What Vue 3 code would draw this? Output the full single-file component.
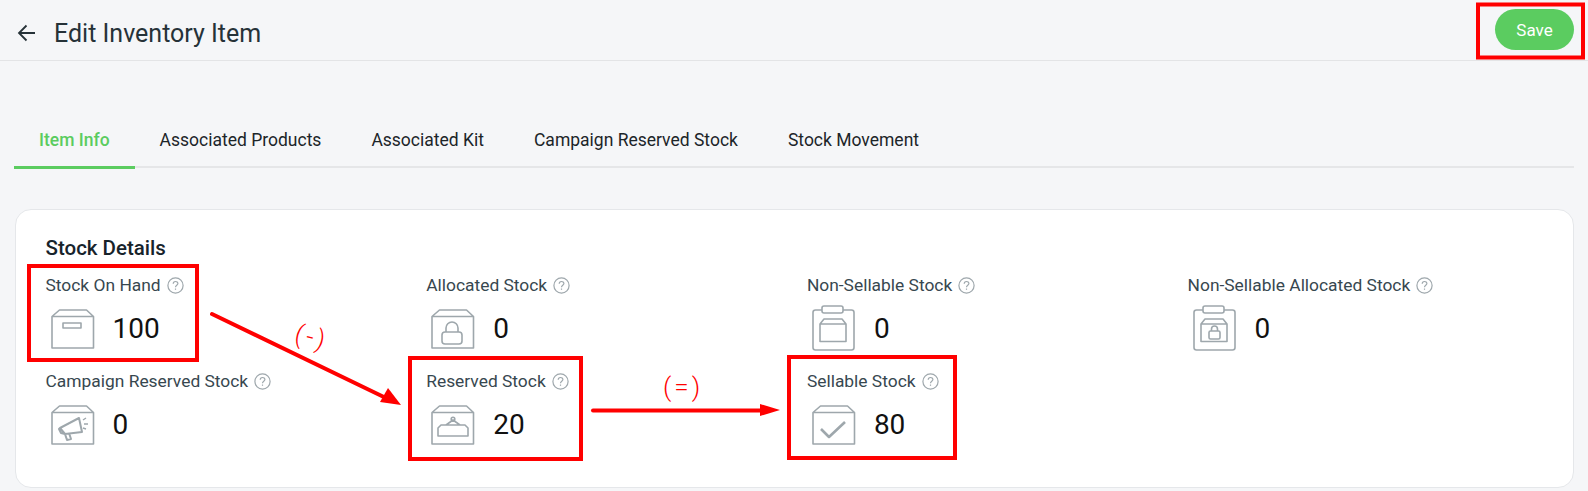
<script setup>
import { ref } from 'vue'

const tabs = ref(['Item Info', 'Associated Products', 'Associated Kit', 'Campaign Reserved Stock', 'Stock Movement'])

const stats = ref([
  { label: 'Stock On Hand', value: 100, icon: 'box' },
  { label: 'Allocated Stock', value: 0, icon: 'lock' },
  { label: 'Non-Sellable Stock', value: 0, icon: 'clip' },
  { label: 'Non-Sellable Allocated Stock', value: 0, icon: 'cliplock' },
  { label: 'Campaign Reserved Stock', value: 0, icon: 'promo' },
  { label: 'Reserved Stock', value: 20, icon: 'tag' },
  { label: 'Sellable Stock', value: 80, icon: 'check' }
])
</script>

<template>
  <div class="page">
    <header class="topbar">
      <div class="title">
        <svg class="back" width="20" height="20" viewBox="0 0 20 20" fill="none" stroke="#263238" stroke-width="1.8">
          <path d="M18 10H2M9.500 2.500L2 10l7.500 7.500" />
        </svg>
        <h1>Edit Inventory Item</h1>
      </div>
      <button class="save">Save</button>
    </header>

    <nav class="tabs">
      <a v-for="(tab, i) in tabs" :key="tab" class="tab" :class="{ active: i === 0 }">{{ tab }}</a>
    </nav>

    <section class="card">
      <h2>Stock Details</h2>
      <div class="grid">
        <div v-for="s in stats" :key="s.label" class="stat">
          <div class="label">
            {{ s.label }}
            <svg class="help" width="17" height="17" viewBox="0 0 17 17" fill="none" stroke="#9ea7ac" stroke-width="1.2">
              <circle cx="8.500" cy="8.500" r="7.600" />
              <path d="M6.200 6.800c0-3 4.700-3 4.700-.2 0 1.700-2.400 1.700-2.400 3.600" />
              <path d="M8.500 11.500v1.300" />
            </svg>
          </div>
          <div class="value-row">
            <svg class="icon" width="46" height="46" viewBox="0 0 46 46" fill="none" stroke="#9ea7ac" stroke-width="1.6" stroke-linejoin="round">
              <template v-if="s.icon === 'clip' || s.icon === 'cliplock'">
                <rect x="2" y="5" width="41" height="40" rx="2.500" />
                <rect x="11" y="1" width="21" height="7" rx="2" fill="#fff" />
                <path d="M9 36.500V19l4-5h18l4 5v17.500zM9 19h26" />
                <template v-if="s.icon === 'cliplock'">
                  <rect x="17" y="26" width="11" height="8" rx="1.500" />
                  <path d="M19.500 26v-2a3 3 0 0 1 6 0v2" />
                </template>
              </template>
              <template v-else>
                <path d="M2 43V11.500L9.500 5h27l7 6.500V43zM2 11.500h41.500" />
                <rect v-if="s.icon === 'box'" x="13" y="18" width="18" height="5" />
                <template v-if="s.icon === 'lock'">
                  <rect x="12" y="27" width="20" height="12" rx="3" />
                  <path d="M16 27v-4a6 6 0 0 1 12 0v4" />
                </template>
                <template v-if="s.icon === 'tag'">
                  <path d="M8 27l3-3h24l3 3v8H8zM16 24l7-5 7 5" />
                  <circle cx="23" cy="18" r="1.800" />
                </template>
                <path v-if="s.icon === 'check'" d="M10 28l8 8 16-15" stroke-width="2.600" />
                <template v-if="s.icon === 'promo'">
                  <g stroke-width="2">
                    <path d="M10 27l19-10 3 14-17 2zM10 27l-1 1 2 4 4 1zM15 33l2 6 4-1-2-6" />
                    <path d="M33 19l3-2M34 23h4M33 27l3 1" stroke-width="1.400" />
                  </g>
                </template>
              </template>
            </svg>
            <span class="value">{{ s.value }}</span>
          </div>
        </div>
      </div>
    </section>

    <!-- red annotations drawn over the screenshot -->
    <svg class="marks" width="1588" height="491" viewBox="0 0 1588 491" fill="none" stroke="#ff0000">
      <rect x="1478" y="4.500" width="105" height="53" stroke-width="4" />
      <rect x="29" y="266" width="168" height="94" stroke-width="4" />
      <rect x="410" y="358" width="171" height="101" stroke-width="4" />
      <rect x="789" y="357" width="166" height="101" stroke-width="4" />
      <path d="M212 314L388 399" stroke-width="4" stroke-linecap="round" />
      <path d="M401 405L380 402L388 388Z" fill="#ff0000" stroke="none" />
      <path d="M593 410.500H765" stroke-width="4" stroke-linecap="round" />
      <path d="M780 410L760 404V416Z" fill="#ff0000" stroke="none" />
      <text class="note tilt" x="295" y="346" fill="#ff0000" stroke="none">(-)</text>
      <text class="note" x="663" y="396" fill="#ff0000" stroke="none">(=)</text>
    </svg>
  </div>
</template>

<style scoped>
.page {
  position: relative;
  width: 1588px;
  height: 491px;
  overflow: hidden;
  background: #f5f6f8;
  font-family: Roboto, sans-serif;
  color: #263238;
}
.topbar {
  display: flex;
  justify-content: space-between;
  align-items: center;
  height: 60px;
  padding: 0 14px 0 17px;
  border-bottom: 1px solid #e3e4e6;
}
.title {
  display: flex;
  align-items: center;
  gap: 17px;
  padding-top: 6px;
}
.title h1 {
  margin: 0;
  font-size: 25px;
  font-weight: 400;
  color: #263238;
}
.save {
  width: 79px;
  height: 41px;
  border: none;
  border-radius: 21px;
  background: #5bcc60;
  color: #fff;
  font-family: Roboto, sans-serif;
  font-size: 17px;
  font-weight: 400;
  margin-top: -1px;
}
.tabs {
  display: flex;
  margin: 59px 14px 0;
  height: 46px;
  border-bottom: 2px solid #e5e6e8;
}
.tab {
  height: 46px;
  padding: 0 25px;
  line-height: 40px;
  font-size: 17.500px;
  color: #1c2529;
}
.tab.active {
  color: #5bcc60;
  font-weight: 500;
  border-bottom: 3px solid #5bcc60;
}
.card {
  margin: 41px 14px 0 15px;
  height: 279px;
  box-sizing: border-box;
  padding: 25px 30px 0 29.500px;
  background: #fff;
  border: 1px solid #e5e7ea;
  border-radius: 16px;
}
.card h2 {
  margin: 0;
  font-size: 20.500px;
  line-height: 26px;
  font-weight: 500;
  color: #17232b;
}
.grid {
  display: grid;
  grid-template-columns: repeat(4, 380.700px);
  grid-auto-rows: 96px;
  margin-top: 12px;
}
.label {
  display: flex;
  align-items: center;
  gap: 6px;
  height: 24px;
  font-size: 17.400px;
  color: #37474f;
}
.value-row {
  display: flex;
  align-items: center;
  gap: 17px;
  padding: 8px 0 0 4px;
}
.value {
  font-size: 28px;
  color: #111;
}
.marks {
  position: absolute;
  left: 0;
  top: 0;
  pointer-events: none;
}
.note {
  font-family: Roboto, sans-serif;
  font-size: 26px;
  font-weight: 300;
  letter-spacing: 3px;
}
.tilt {
  transform-box: fill-box;
  transform-origin: center;
  transform: rotate(15deg);
}
</style>
